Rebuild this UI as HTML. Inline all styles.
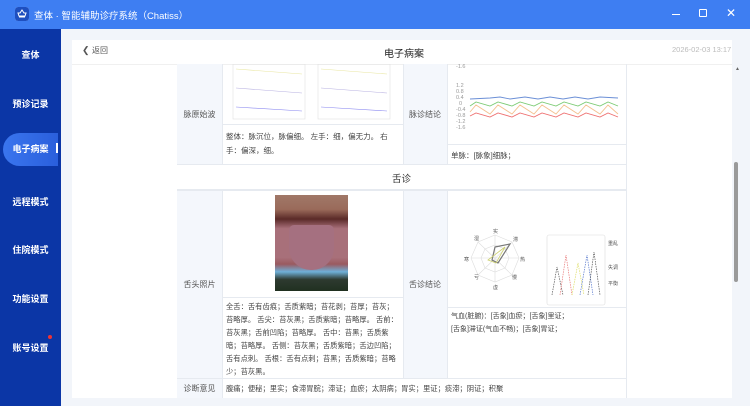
<!DOCTYPE html>
<html><head><meta charset="utf-8"><style>
*{margin:0;padding:0;box-sizing:border-box}
body{width:750px;height:406px;overflow:hidden;background:#f2f5fa;font-family:"Liberation Sans","Noto Sans CJK SC",sans-serif;position:relative;color:#333}
.top{position:absolute;left:0;top:0;width:750px;height:29px;background:#3e7ef2;color:#fff;font-size:10px}
.side{position:absolute;left:0;top:29px;width:61px;height:377px;background:#0b36a6}
.side div{position:absolute;left:0;width:61px;text-align:center;color:#fff;font-size:9px;font-weight:bold}
.card{position:absolute;left:72px;top:40px;width:660px;height:360px;background:#fff}
.a{position:absolute}
.lbl{position:absolute;background:#f4f7fc;font-size:8px;color:#555;display:flex;align-items:center;justify-content:center}
.t{position:absolute;font-size:7.5px;line-height:13.5px;color:#444}
.b{position:absolute;background:#e6eaf0}
</style></head><body>
<div class="top">
 <div class="a" style="left:15px;top:7px;width:14px;height:14px;background:#fff;border-radius:3px"><svg width="14" height="14" viewBox="0 0 14 14"><rect width="14" height="14" rx="3" fill="#1e4fbf"/><path d="M7 3 L9 6 L11 6 L10 9 L4 9 L3 6 L5 6Z M4 10 L10 10" stroke="#fff" fill="none" stroke-width="1"/></svg></div>
 <div class="a" style="left:34px;top:8px;font-size:9.5px">查体 · 智能辅助诊疗系统（Chatiss）</div>
 <div class="a" style="left:672px;top:14px;width:8px;height:1px;background:#fff"></div>
 <div class="a" style="left:699px;top:9px;width:8px;height:8px;border:1px solid #fff;border-radius:1px"></div>
 <div class="a" style="left:726px;top:6px;font-size:12px">✕</div>
</div>
<div class="side">
 <div style="top:19px">查体</div>
 <div style="top:68px">预诊记录</div>
 <div style="top:104px;left:3px;width:55px;height:33px;background:linear-gradient(90deg,#3a75ee,#2a5fdc);border-radius:17px 0 0 17px;line-height:33px">电子病案</div>
 <div style="top:114px;left:56px;width:2px;height:10px;background:#fff"></div>
 <div style="top:166px">远程模式</div>
 <div style="top:214px">住院模式</div>
 <div style="top:263px">功能设置</div>
 <div style="top:312px">账号设置</div>
 <div style="top:306px;left:48px;width:4px;height:4px;border-radius:2px;background:#e33"></div>
</div>
<div class="card">
 <div class="a" style="left:10px;top:5px;font-size:9px;color:#555">❮ <span style="font-size:8px">返回</span></div>
 <div class="a" style="left:312px;top:5px;font-size:10px;color:#222">电子病案</div>
 <div class="a" style="left:600px;top:5px;font-size:7.5px;color:#bbb">2026-02-03 13:17</div>
 <div class="a" style="left:0;top:24px;width:660px;height:1px;background:#f0f0f0"></div>
</div>
<div class="lbl" style="left:177px;top:64px;width:45px;height:100px">脉原始波</div>
<div class="lbl" style="left:403px;top:64px;width:44px;height:100px">脉诊结论</div>
<svg class="a" style="left:230px;top:64px" width="170" height="58"><g fill="none" stroke-width="0.6"><rect x="3" y="0" width="72" height="55" stroke="#e0e0e0"/><rect x="88" y="0" width="72" height="55" stroke="#e0e0e0"/>
<path d="M6 5 L72 10" stroke="#e8e6a0"/><path d="M6 24 L72 29" stroke="#b7b0e0"/><path d="M6 43 L72 47" stroke="#8a88f0"/>
<path d="M91 5 L157 10" stroke="#e8e6a0"/><path d="M91 24 L157 29" stroke="#b7b0e0"/><path d="M91 43 L157 47" stroke="#8a88f0"/></g></svg>
<svg class="a" style="left:450px;top:64px" width="175" height="70"><g font-size="5.5" fill="#999" font-family="Liberation Sans"><text x="6" y="4">-1.6</text><text x="6" y="23">1.2</text><text x="6" y="29">0.8</text><text x="6" y="35">0.4</text><text x="9" y="41">0</text><text x="6" y="47">-0.4</text><text x="6" y="53">-0.8</text><text x="6" y="59">-1.2</text><text x="6" y="65">-1.6</text></g>
<g fill="none" stroke-width="0.9"><path d="M20 35 L40 34 L50 33 L60 35 L75 33 L88 35 L100 33 L113 35 L125 33 L138 35 L150 33 L168 34" stroke="#6b8fd6"/>
<path d="M20 42 L26 38 L40 42 L48 38 L62 42 L70 38 L84 42 L92 38 L106 42 L114 38 L128 42 L136 38 L150 42 L158 38 L168 42" stroke="#7ccb74"/>
<path d="M20 48 L26 41 L40 50 L48 41 L62 50 L70 41 L84 50 L92 41 L106 50 L114 41 L128 50 L136 41 L150 50 L158 41 L168 50" stroke="#f4c090"/>
<path d="M20 52 L26 49 L40 53 L48 49 L62 53 L70 49 L84 53 L92 49 L106 53 L114 49 L128 53 L136 49 L150 53 L158 49 L168 53" stroke="#ee7070"/></g></svg>
<div class="b" style="left:222px;top:124px;width:181px;height:1px"></div>
<div class="b" style="left:447px;top:144px;width:179px;height:1px"></div>
<div class="t" style="left:226px;top:130px;width:174px">整体：脉沉位，脉偏细。 左手：细，偏无力。 右手：偏深，细。</div>
<div class="t" style="left:451px;top:149px">单脉：[脉象]细脉；</div>
<div class="b" style="left:177px;top:164px;width:449px;height:1px"></div>
<div class="a" style="left:392px;top:171px;font-size:9.5px;color:#333">舌诊</div>
<div class="b" style="left:177px;top:189px;width:449px;height:2px"></div>
<div class="lbl" style="left:177px;top:191px;width:45px;height:187px">舌头照片</div>
<div class="lbl" style="left:403px;top:191px;width:44px;height:187px">舌诊结论</div>
<div class="b" style="left:222px;top:64px;width:1px;height:100px"></div>
<div class="b" style="left:403px;top:64px;width:1px;height:100px"></div>
<div class="b" style="left:447px;top:64px;width:1px;height:100px"></div>
<div class="b" style="left:222px;top:191px;width:1px;height:207px"></div>
<div class="b" style="left:403px;top:191px;width:1px;height:187px"></div>
<div class="b" style="left:447px;top:191px;width:1px;height:187px"></div>
<div class="b" style="left:626px;top:64px;width:1px;height:334px"></div>
<div class="a" style="left:275px;top:195px;width:73px;height:96px;background:linear-gradient(180deg,#a07868 0%,#9a6a5a 15%,#5a2a28 25%,#a8707a 35%,#a8707a 65%,#9a5a60 72%,#6fb0d8 80%,#2e3a30 88%,#203020 100%)"></div>
<div class="a" style="left:289px;top:225px;width:45px;height:45px;background:#a57080;border-radius:5px 5px 22px 22px"></div>
<div class="b" style="left:222px;top:297px;width:181px;height:1px"></div>
<div class="b" style="left:447px;top:307px;width:179px;height:1px"></div>
<div class="t" style="left:226px;top:300px;width:172px;font-size:7.3px;line-height:13px">全舌：舌有齿痕；舌质紫暗；苔花剥；苔厚；苔灰；苔略厚。 舌尖：苔灰黑；舌质紫暗；苔略厚。 舌前：苔灰黑；舌前凹陷；苔略厚。 舌中：苔黑；舌质紫暗；苔略厚。 舌侧：苔灰黑；舌质紫暗；舌边凹陷；舌有点刺。 舌根：舌有点刺；苔黑；舌质紫暗；苔略少；苔灰黑。</div>
<div class="t" style="left:451px;top:311px;width:120px;font-size:7px;line-height:12.5px">气血(脏腑)：[舌象]血瘀；[舌象]里证；[舌象]滞证(气血不畅)；[舌象]胃证；</div>
<svg class="a" style="left:460px;top:225px" width="160" height="85"><g fill="none" stroke="#ddd" stroke-width="0.6"><polygon points="35,10 52,17 59,33 52,50 35,57 18,50 11,33 18,17"/><polygon points="35,20 45,24 49,33 45,43 35,47 25,43 21,33 25,24"/><path d="M35 10 L35 57 M11 33 L59 33 M18 17 L52 50 M52 17 L18 50"/><rect x="87" y="10" width="58" height="70" rx="2"/></g>
<path d="M35 22 L50 19 L38 38 L32 35Z" fill="none" stroke="#777" stroke-width="1.2"/><path d="M28 35 L45 22 L36 38Z" fill="none" stroke="#cdd070" stroke-width="0.8"/>
<g font-size="5" fill="#555"><text x="33" y="8">实</text><text x="53" y="16">滞</text><text x="60" y="36">热</text><text x="52" y="54">慢</text><text x="33" y="64">虚</text><text x="14" y="54">亏</text><text x="4" y="36">寒</text><text x="14" y="15">湿</text><text x="148" y="20">重乱</text><text x="148" y="44">失调</text><text x="148" y="60">平衡</text></g>
<g fill="none" stroke-width="0.7" stroke-dasharray="1.5 1"><path d="M92 70 L97 42 L103 70" stroke="#555"/><path d="M100 70 L106 30 L112 70" stroke="#e87878"/><path d="M112 70 L118 38 L124 70" stroke="#dddd66"/><path d="M120 70 L127 30 L133 70" stroke="#5577cc"/><path d="M128 70 L134 27 L140 70" stroke="#555"/></g></svg>
<div class="lbl" style="left:177px;top:378px;width:45px;height:20px;border-top:1px solid #e6eaf0">诊断意见</div>
<div class="b" style="left:222px;top:378px;width:404px;height:1px"></div>
<div class="t" style="left:226px;top:382px;font-size:7.3px">腹痛；便秘；里实；食滞胃脘；滞证；血瘀；太阴病；胃实；里证；痰滞；阴证；积聚</div>
<div class="a" style="left:0;top:398px;width:750px;height:8px;background:#f2f5fa"></div>
<div class="side" style="top:398px;height:8px"></div>
<div class="a" style="left:734px;top:162px;width:4px;height:120px;background:#9a9a9a;border-radius:2px"></div>
<div class="a" style="left:735px;top:66px;font-size:5px;color:#666">▲</div>
</body></html>
